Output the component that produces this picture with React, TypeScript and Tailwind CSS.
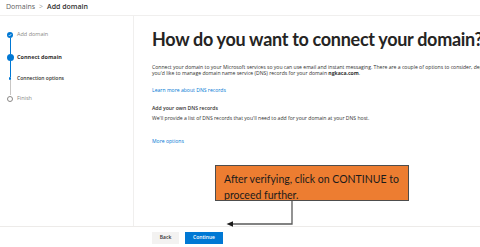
import React from "react";

const ui = { fontFamily: '"Open Sans", "Noto Sans", sans-serif' };

const Step = ({ icon, label, className }: { icon: React.ReactNode; label: string; className: string }) => (
  <div className="flex items-center h-[7px]">
    <div className="w-[8px] flex justify-center">{icon}</div>
    <span className={`ml-[3px] leading-none ${className}`}>{label}</span>
  </div>
);

const Connector = ({ h, color }: { h: string; color: string }) => (
  <div className="w-[8px] flex justify-center">
    <div className={`w-px ${h} ${color}`} />
  </div>
);

export default function App() {
  return (
    <div className="relative w-[480px] h-[247px] overflow-hidden bg-white flex flex-col" style={ui}>
      {/* Breadcrumb */}
      <div className="h-[16px] shrink-0 border-b border-[#f0efee] flex items-center pl-[6px] text-[7px] leading-none pb-[2px]">
        <span className="text-[#605e5c]">Domains</span>
        <span className="mx-[4px] text-[#a19f9d]">&gt;</span>
        <span className="text-[#323130] font-semibold">Add domain</span>
      </div>

      <div className="flex flex-1 min-h-0">
        {/* Steps */}
        <div className="w-[134px] shrink-0 border-r border-[#f0efee] pl-[6px] pt-[15px]">
          <Step
            label="Add domain"
            className="text-[5.5px] text-[#8a8886]"
            icon={
              <div className="w-[6px] h-[6px] rounded-full bg-[#0078d4] flex items-center justify-center">
                <svg width="4" height="4" viewBox="0 0 8 8">
                  <path d="M1.5 4.2 L3.3 6 L6.6 2" stroke="white" strokeWidth="1.4" fill="none" />
                </svg>
              </div>
            }
          />
          <Connector h="h-[16px]" color="bg-[#0078d4]" />
          <Step
            label="Connect domain"
            className="text-[5.5px] font-bold text-[#323130]"
            icon={<div className="w-[7px] h-[7px] rounded-full bg-[#0078d4]" />}
          />
          <Connector h="h-[16px]" color="bg-[#0078d4]" />
          <div className="flex items-center h-[3px]">
            <div className="w-[8px] flex justify-center">
              <div className="w-[2.5px] h-[2.5px] rounded-full bg-[#0078d4]" />
            </div>
            <span className="ml-[3px] leading-none text-[5px] font-semibold text-[#323130]">Connection options</span>
          </div>
          <Connector h="h-[15px]" color="bg-[#c8c6c4]" />
          <Step
            label="Finish"
            className="text-[5.5px] text-[#8a8886]"
            icon={<div className="w-[6px] h-[6px] rounded-full border border-[#8a8886] bg-white" />}
          />
        </div>

        {/* Main */}
        <div className="flex-1 min-w-0 overflow-hidden pl-[18px] pt-[14px]">
          <h1
            className="text-[18px] leading-none font-bold text-[#252423] whitespace-nowrap tracking-[-0.3px]"
            style={{ fontFamily: 'Lato, "Open Sans", sans-serif' }}
          >
            How do you want to connect your domain?
          </h1>
          <div className="mt-[16px] text-[5.1px] leading-[6px] text-[#323130] whitespace-nowrap">
            <div>
              Connect your domain to your Microsoft services so you can use email and instant messaging. There are a couple of options to consider, depending on how
            </div>
            <div>
              you'd like to manage domain name service (DNS) records for your domain <span className="font-bold">ngkaca.com</span>.
            </div>
          </div>
          <div className="mt-[11px] text-[5.1px] leading-[6px] text-[#0078d4]">Learn more about DNS records</div>
          <div className="mt-[12px] text-[5.1px] leading-[6px] font-semibold text-[#323130]">Add your own DNS records</div>
          <div className="mt-[4px] text-[5.1px] leading-[6px] text-[#323130] whitespace-nowrap">
            We'll provide a list of DNS records that you'll need to add for your domain at your DNS host.
          </div>
          <div className="mt-[17px] text-[5.1px] leading-[6px] text-[#0078d4]">More options</div>
        </div>
      </div>

      {/* Footer */}
      <div className="h-[21px] shrink-0 border-t border-[#edebe9] flex items-start pt-[5px] pl-[152px] gap-[6px]">
        <button className="w-[27px] h-[12px] bg-[#f3f2f1] text-[5px] font-semibold text-[#323130] flex items-center justify-center">
          Back
        </button>
        <button className="w-[38px] h-[12px] bg-[#0078d4] text-[5px] font-semibold text-white flex items-center justify-center">
          Continue
        </button>
      </div>

      {/* Annotation callout */}
      <div
        className="absolute left-[215px] top-[165px] w-[194px] h-[36px] bg-[#ed7d31] border border-[#4d4d4d] overflow-hidden pl-[8px] pt-[5px] text-[10.5px] leading-[16px] text-[#1b1b1b]"
        style={{ fontFamily: 'Lato, "Liberation Sans", sans-serif' }}
      >
        After verifying, click on CONTINUE to
        <br />
        proceed further.
      </div>
      <svg className="absolute left-0 top-0 pointer-events-none" width="480" height="247">
        <path d="M292 201 V224 H232" stroke="#595959" strokeWidth="1.3" fill="none" />
        <polygon points="226.5,224 233,221.2 233,226.8" fill="#1b1b1b" />
      </svg>
    </div>
  );
}
